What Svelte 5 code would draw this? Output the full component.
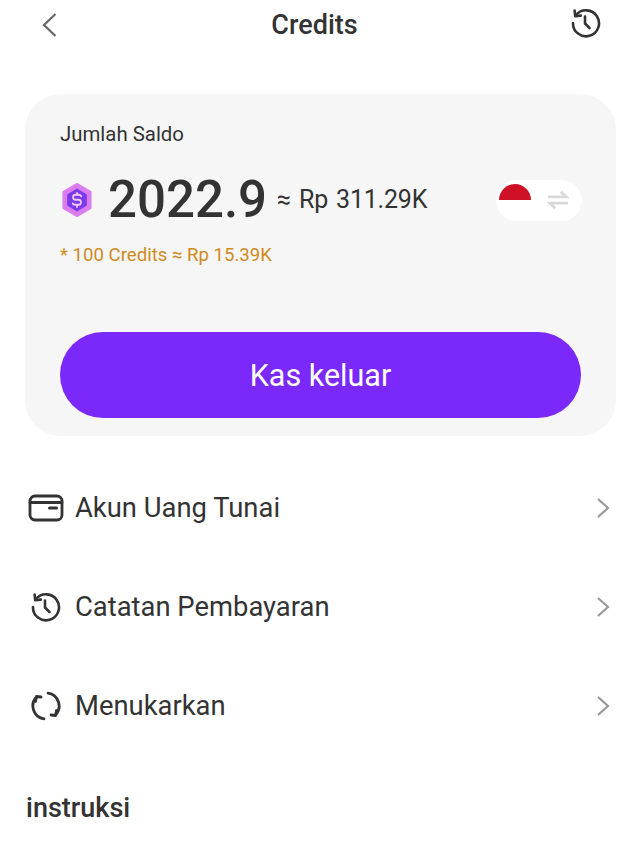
<script>
  const rows = [
    { label: 'Akun Uang Tunai', icon: 'wallet' },
    { label: 'Catatan Pembayaran', icon: 'history' },
    { label: 'Menukarkan', icon: 'exchange' }
  ]
</script>

{#snippet historyIcon(size)}
  <svg width={size} height={size} viewBox="0 0 32 32" fill="none" stroke="#333" stroke-width="2.6" stroke-linecap="round" stroke-linejoin="round">
    <path d="M6 8A13 13 0 1 1 3 16" />
    <path d="M4.600 3.600 5.200 9.200 10.800 8.600" />
    <path d="M15 9.500v7l4.500 4.500" />
  </svg>
{/snippet}

<div class="page">
  <header>
    <svg class="back" width="18" height="26" viewBox="0 0 18 26" fill="none" stroke="#666" stroke-width="2.2">
      <path d="M14.500 2 3 13 14.500 24" />
    </svg>
    <h1>Credits</h1>
    <span class="history">{@render historyIcon(32)}</span>
  </header>

  <section class="card">
    <div class="label">Jumlah Saldo</div>
    <div class="balance">
      <svg class="coin" width="30" height="34" viewBox="0 0 32 34" preserveAspectRatio="none">
        <path d="M16 1 30.500 9v16L16 33 1.500 25V9z" fill="#dc7cf0" stroke="#dc7cf0" stroke-linejoin="round" stroke-width="2" />
        <path d="M16 5.500 26.500 11.500v11L16 28.500 5.500 22.500v-11z" fill="#7c3bea" />
        <path d="M20.500 13.200c-.6-1-1.500-1.400-2.500-1.400h-3.600c-1.500 0-2.600 1-2.600 2.500s1.100 2.500 2.600 2.500h3.200c1.500 0 2.600 1 2.600 2.500s-1.100 2.500-2.600 2.500H14c-1 0-1.900-.4-2.500-1.400M16 10v2M16 22v2" fill="none" stroke="#f0c8fa" stroke-width="1.900" stroke-linecap="round" />
      </svg>
      <span class="amount">2022.9</span>
      <span class="approx">≈ Rp 311.29K</span>
      <div class="switch">
        <span class="flag"></span>
        <svg width="22" height="22" viewBox="0 0 24 22" fill="none" stroke="#d9d9d9" stroke-width="3">
          <path d="M1 7.500h20L15 2" />
          <path d="M23 14.500H3L9 20" />
        </svg>
      </div>
    </div>
    <div class="rate">* 100 Credits ≈ Rp 15.39K</div>
    <button class="cash">Kas keluar</button>
  </section>

  <ul>
    {#each rows as row}
      <li>
        <span class="icon">
          {#if row.icon === 'wallet'}
            <svg width="36" height="28" viewBox="0 0 36 28" fill="none" stroke="#333" stroke-width="2.800" stroke-linecap="round">
              <rect x="2" y="2" width="32" height="24" rx="5" />
              <path d="M2 8.500h32" />
              <path d="M21.500 14h7" stroke-width="3" />
            </svg>
          {:else if row.icon === 'history'}
            {@render historyIcon(32)}
          {:else}
            <svg width="32" height="32" viewBox="0 0 32 32" fill="none" stroke="#333" stroke-width="2.800" stroke-linecap="round" stroke-linejoin="round">
              <path d="M18 3.200A13 13 0 0 1 25.500 25" />
              <path d="M26.500 20.500 25.500 25.500 21 25" />
              <path d="M14 28.800A13 13 0 0 1 6.500 7" />
              <path d="M5.500 11.500 6.500 6.500 11 7" />
            </svg>
          {/if}
        </span>
        <span class="text">{row.label}</span>
        <svg class="chev" width="14" height="22" viewBox="0 0 14 22" fill="none" stroke="#999" stroke-width="2.200">
          <path d="M2 2l10 9-10 9" />
        </svg>
      </li>
    {/each}
  </ul>

  <h2>instruksi</h2>
</div>

<style>
  :global(body) {
    background: #fff;
  }

  .page {
    height: 853px;
    overflow: hidden;
    font-family: Roboto, sans-serif;
    color: #333;
  }

  header {
    display: flex;
    align-items: center;
    justify-content: space-between;
    height: 50px;
    padding: 0 38px 0 41px;
  }

  h1 {
    margin: 0;
    font-size: 27px;
    font-weight: 500;
  }

  .back, .history {
    display: block;
  }

  .card {
    margin: 44px 24px 0 25px;
    height: 342px;
    box-sizing: border-box;
    padding: 28px 35px 0;
    background: #f6f6f6;
    border-radius: 36px;
  }

  .label {
    font-size: 20.400px;
    line-height: 24px;
  }

  .balance {
    display: flex;
    align-items: center;
    margin-top: 23px;
    height: 60px;
  }

  .coin {
    margin: 2px 16px 0 2px;
  }

  .amount {
    font-size: 51px;
    font-weight: 500;
  }

  .approx {
    margin-left: 10px;
    font-size: 25px;
    letter-spacing: -0.2px;
    word-spacing: 2px;
  }

  .switch {
    display: flex;
    align-items: center;
    justify-content: space-between;
    margin: 2px -1px 0 auto;
    width: 86px;
    height: 41px;
    box-sizing: border-box;
    padding-right: 13px;
    background: #fff;
    border-radius: 21px;
  }

  .flag {
    width: 32px;
    height: 32px;
    border-radius: 50%;
    margin-left: 3px;
    background: linear-gradient(#cf1127 50%, #fff 50%);
  }

  .rate {
    margin-top: 14px;
    font-size: 18.600px;
    line-height: 24px;
    color: #d08a1e;
  }

  .cash {
    display: block;
    width: 100%;
    height: 86px;
    margin-top: 65px;
    border: none;
    border-radius: 43px;
    background: #7b28fa;
    color: #fff;
    font-family: inherit;
    font-size: 30.500px;
  }

  ul {
    list-style: none;
    margin: 22px 0 0;
    padding: 0 30px 0 28px;
  }

  li {
    display: flex;
    align-items: center;
    height: 99px;
  }

  .icon {
    display: flex;
    justify-content: center;
    width: 36px;
    margin-right: 11px;
  }

  .text {
    font-size: 27.400px;
  }

  .chev {
    margin-left: auto;
  }

  h2 {
    margin: 37px 0 0 26px;
    font-size: 27px;
    font-weight: 500;
  }
</style>
